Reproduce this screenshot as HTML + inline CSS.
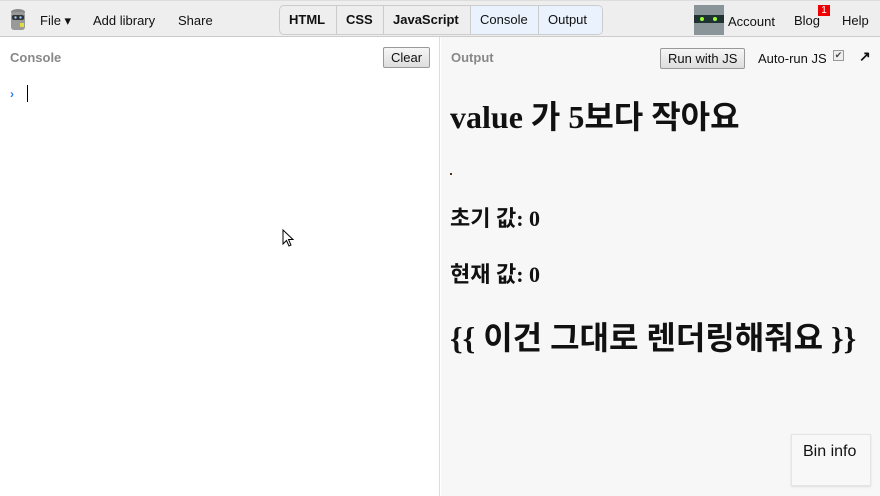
<!DOCTYPE html>
<html><head><meta charset="utf-8"><style>
*{box-sizing:border-box;margin:0;padding:0}
body{width:880px;height:496px;overflow:hidden;font-family:"Liberation Sans",sans-serif;font-size:13px;color:#111;background:#fff;position:relative}
.hdr{position:absolute;left:0;top:0;width:880px;height:37px;background:#eee;border-top:1px solid #ddd;border-bottom:1px solid #ccc}
.t{position:absolute;top:12px;font-size:13px}
.tabs{position:absolute;left:279px;top:4px;height:30px;width:324px;border:1px solid #ccc;border-radius:5px;display:flex;overflow:hidden;background:#eee}
.tabs div{height:100%;line-height:28px;padding:0 9px;border-right:1px solid #ccc;font-size:13px;flex:none}
.tabs b{font-weight:bold}
.left{position:absolute;left:0;top:37px;width:440px;height:459px;background:#fff;border-right:1px solid #ddd}
.right{position:absolute;left:441px;top:37px;width:439px;height:459px;background:#f7f7f7}
.lbl{position:absolute;top:13px;font-size:13px;color:#888;font-weight:bold}
.btn{position:absolute;height:21px;border:1px solid #999;border-radius:2px;background:linear-gradient(#f6f6f6,#ddd);font-size:13px;line-height:19px;padding:0 7px}
.out{position:absolute;left:9px;font-family:"Liberation Serif","Noto Sans CJK KR",serif;font-weight:bold;color:#111;white-space:nowrap}
</style></head><body>
<div class="hdr">
 <svg style="position:absolute;left:9px;top:7px" width="18" height="24" viewBox="0 0 18 24"><ellipse cx="9" cy="4" rx="7" ry="3" fill="#888"/><rect x="2" y="4" width="14" height="18" rx="3" fill="#999"/><rect x="3" y="7" width="12" height="5" rx="2" fill="#333"/><circle cx="6.5" cy="9.5" r="1.2" fill="#9cf"/><circle cx="11.5" cy="9.5" r="1.2" fill="#9cf"/><rect x="11" y="15" width="4" height="4" fill="#dd4"/></svg>
 <div class="t" style="left:40px">File ▾</div>
 <div class="t" style="left:93px">Add library</div>
 <div class="t" style="left:178px">Share</div>
 <div class="tabs"><div style="width:57px"><b>HTML</b></div><div style="width:47px"><b>CSS</b></div><div style="width:87px"><b>JavaScript</b></div><div style="width:68px;background:#eaf2fd">Console</div><div style="width:64px;background:#eaf2fd;border-right:none">Output</div></div>
 <div style="position:absolute;left:694px;top:4px;width:30px;height:30px;background:#8a9599"><div style="position:absolute;left:0;top:10px;width:30px;height:8px;background:#1e3232"></div><div style="position:absolute;left:6px;top:12px;width:4px;height:4px;border-radius:2px;background:#9f3"></div><div style="position:absolute;left:19px;top:12px;width:4px;height:4px;border-radius:2px;background:#9f3"></div></div>
 <div class="t" style="left:728px;top:13px">Account</div>
 <div class="t" style="left:794px">Blog</div>
 <div style="position:absolute;left:818px;top:4px;width:12px;height:11px;background:#e00;color:#fff;font-size:10px;line-height:11px;text-align:center">1</div>
 <div class="t" style="left:842px">Help</div>
</div>
<div class="left">
 <div class="lbl" style="left:10px">Console</div>
 <div class="btn" style="left:383px;top:10px">Clear</div>
 <div style="position:absolute;left:10px;top:50px;color:#37f;font-size:12px;font-weight:bold">›</div>
 <div style="position:absolute;left:27px;top:48px;width:1px;height:17px;background:#000"></div>
 <svg style="position:absolute;left:282px;top:192px" width="12" height="19" viewBox="0 0 12 19"><path d="M1 1 L1 15 L4.5 11.5 L7 17 L9 16 L6.5 10.5 L11 10.5 Z" fill="#fff" stroke="#000" stroke-width="1"/></svg>
</div>
<div class="right">
 <div class="lbl" style="left:10px">Output</div>
 <div class="btn" style="left:219px;top:11px">Run with JS</div>
 <div style="position:absolute;left:317px;top:14px;font-size:13px">Auto-run JS</div>
 <div style="position:absolute;left:392px;top:13px;width:11px;height:11px;border:1px solid #999;background:#eee;font-size:9px;line-height:9px;text-align:center;color:#444">✔</div>
 <div style="position:absolute;left:418px;top:11px;font-size:14px;font-weight:bold">↗</div>
 <div class="out" style="top:55px;font-size:32px">value 가 5보다 작아요</div>
 <div style="position:absolute;left:9px;top:136px;width:2px;height:2px;background:#531"></div>
 <div class="out" style="top:164px;font-size:22px">초기 값: 0</div>
 <div class="out" style="top:220px;font-size:22px">현재 값: 0</div>
 <div class="out" style="top:276px;font-size:32px">{{ 이건 그대로 렌더링해줘요 }}</div>
 <div style="position:absolute;left:350px;top:397px;width:80px;height:52px;background:#f8f8f8;border:1px solid #e4e4e4;box-shadow:0 1px 2px rgba(0,0,0,.1);font-size:16px;padding:8px 0 0 11px">Bin info</div>
</div>
</body></html>
